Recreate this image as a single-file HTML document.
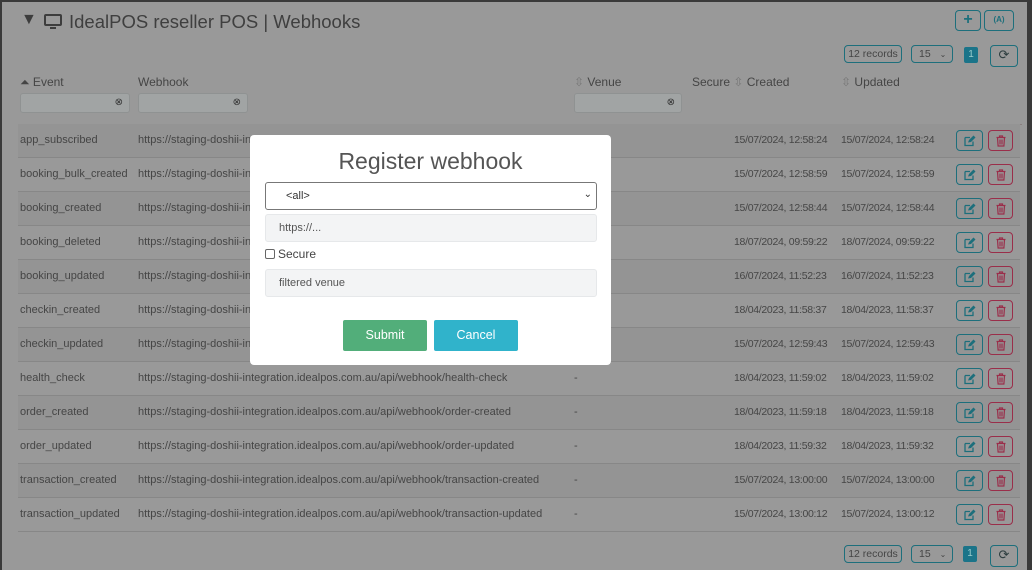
<!DOCTYPE html>
<html><head><meta charset="utf-8"><style>
*{box-sizing:border-box;margin:0;padding:0}
body{width:1032px;height:570px;overflow:hidden;background:#3a3a3a;font-family:"Liberation Sans",sans-serif;color:#454545;position:relative}
.page{position:absolute;left:2px;top:2px;width:1025px;height:568px;background:#999}
.abs{position:absolute;white-space:nowrap}
.t{font-size:11px}
.dt{font-size:10.5px;letter-spacing:-0.3px}
.btn{position:absolute;border:1.5px solid #1d6f7c;border-radius:4px}
.red{border-color:#9a2e4a}
.row{position:absolute;left:18px;width:1002px;height:34px;border-bottom:1px solid #878787}
.flt{position:absolute;height:20px;background:#a1a4a4;border:1px solid #8f9292;border-radius:3px}
.flt span{position:absolute;right:6px;top:3px;font-size:10px;color:#333}
.modal{position:absolute;left:250px;top:135px;width:361px;height:230px;background:#fff;border-radius:4px}
.inp{position:absolute;left:15px;width:332px;height:28px;background:#f3f4f5;border:1px solid #e6e8ea;border-radius:3px;font-size:11px;color:#555;padding:7px 13px}
.btn svg{position:absolute;left:50%;top:50%;transform:translate(-50%,-50%)}
</style></head><body>
<div class="page">
<div class="abs" style="left:19px;top:9px;font-size:16px;color:#3d3d3d">▼</div>
<svg class="abs" style="left:42px;top:12px" width="18" height="16" viewBox="0 0 18 16"><rect x="1" y="1" width="16" height="10" rx="1" fill="none" stroke="#3d3d3d" stroke-width="2"/><rect x="6" y="13" width="6" height="2" fill="#3d3d3d"/></svg>
<div class="abs" style="left:67px;top:9px;font-size:18.5px;color:#3f3f3f">IdealPOS reseller POS | Webhooks</div>
<div class="btn" style="left:953px;top:8px;width:26px;height:21px;color:#1d6f7c;font-size:16px;text-align:center;line-height:17px;font-weight:bold">+</div>
<div class="btn" style="left:982px;top:8px;width:30px;height:21px;color:#1d6f7c;font-size:8px;text-align:center;line-height:18px;font-weight:bold">(A)</div>
<div class="btn" style="left:842px;top:43px;width:58px;height:18px;border-width:1px;font-size:10.5px;text-align:center;line-height:16px">12 records</div>
<div class="btn" style="left:909px;top:43px;width:42px;height:18px;border-width:1px;font-size:10.5px;padding-left:7px;line-height:16px">15 <span style="margin-left:6px;font-size:8px">⌄</span></div>
<div class="abs" style="left:962px;top:45px;width:14px;height:16px;background:#1b7489;border-radius:2px;color:#9cc;font-size:10px;text-align:center;line-height:16px">1</div>
<div class="btn" style="left:988px;top:43px;width:28px;height:22px;text-align:center;line-height:18px;font-size:13px;color:#2d3d3f">⟳</div>
<div class="abs" style="left:18px;top:73px;font-size:12px">⏶ Event</div>
<div class="abs" style="left:136px;top:73px;font-size:12px">Webhook</div>
<div class="abs" style="left:572px;top:73px;font-size:12px"><span style="color:#777">⇳</span> Venue</div>
<div class="abs" style="left:690px;top:73px;font-size:12px">Secure <span style="color:#777">⇳</span> Created</div>
<div class="abs" style="left:839px;top:73px;font-size:12px"><span style="color:#777">⇳</span> Updated</div>
<div class="flt" style="left:18px;top:91px;width:110px"><span>⊗</span></div>
<div class="flt" style="left:136px;top:91px;width:110px"><span>⊗</span></div>
<div class="flt" style="left:572px;top:91px;width:108px"><span>⊗</span></div>
<div class="abs" style="left:18px;top:122px;width:1002px;border-top:1px solid #8a8080"></div>
</div>
<div style="position:absolute;left:0;top:0">
<script>
var d=[["app_subscribed","app-subscribed","15/07/2024, 12:58:24"],["booking_bulk_created","","15/07/2024, 12:58:59"],["booking_created","","15/07/2024, 12:58:44"],["booking_deleted","","18/07/2024, 09:59:22"],["booking_updated","","16/07/2024, 11:52:23"],["checkin_created","","18/04/2023, 11:58:37"],["checkin_updated","","15/07/2024, 12:59:43"],["health_check","health-check","18/04/2023, 11:59:02"],["order_created","order-created","18/04/2023, 11:59:18"],["order_updated","order-updated","18/04/2023, 11:59:32"],["transaction_created","transaction-created","15/07/2024, 13:00:00"],["transaction_updated","transaction-updated","15/07/2024, 13:00:12"]];
var ed='<svg width="12" height="11" viewBox="0 0 12 11"><path d="M1 2h5M1 2v8h8V6" fill="none" stroke="#1d6f7c" stroke-width="1.3"/><path d="M4 7l1-2.5L9.5 0 11.5 2 7 6.5z" fill="#1d6f7c"/></svg>';
var tr='<svg width="10" height="12" viewBox="0 0 10 12"><path d="M0.5 2.5h9M3.5 2.5V1h3v1.5M1.5 2.5l.6 8.5h5.8l.6-8.5M4 4.5v5M6 4.5v5" fill="none" stroke="#9a2e4a" stroke-width="1.2"/></svg>';
var h="";
d.forEach(function(r,i){var y=124+i*34;
h+='<div class="row" style="top:'+y+'px;background:'+(i%2==0?'#949494':'#999')+'"></div>';
h+='<div class="abs t" style="left:20px;top:'+(y+10)+'px">'+r[0]+'</div>';
h+='<div class="abs t" style="left:138px;top:'+(y+10)+'px">https://staging-doshii-integration.idealpos.com.au/api/webhook/'+(r[1]||r[0].replace(/_/g,'-'))+'</div>';
h+='<div class="abs t" style="left:574px;top:'+(y+10)+'px">-</div>';
h+='<div class="abs dt" style="left:734px;top:'+(y+10)+'px">'+r[2]+'</div>';
h+='<div class="abs dt" style="left:841px;top:'+(y+10)+'px">'+r[2]+'</div>';
h+='<div class="btn" style="left:956px;top:'+(y+6)+'px;width:27px;height:21px">'+ed+'</div>';
h+='<div class="btn red" style="left:988px;top:'+(y+6)+'px;width:25px;height:21px">'+tr+'</div>';
});
h+='<div class="btn" style="left:844px;top:545px;width:58px;height:18px;border-width:1px;font-size:10.5px;text-align:center;line-height:16px">12 records</div>';
h+='<div class="btn" style="left:911px;top:545px;width:42px;height:18px;border-width:1px;font-size:10.5px;padding-left:7px;line-height:16px">15 <span style="margin-left:6px;font-size:8px">⌄</span></div>';
h+='<div class="abs" style="left:963px;top:546px;width:14px;height:16px;background:#1b7489;border-radius:2px;color:#9cc;font-size:10px;text-align:center;line-height:16px">1</div>';
h+='<div class="btn" style="left:990px;top:545px;width:28px;height:22px;text-align:center;line-height:18px;font-size:13px;color:#2d3d3f">⟳</div>';
document.write(h);
</script>
</div>
<div class="modal">
<div class="abs" style="left:0;width:361px;text-align:center;top:13px;font-size:23px;color:#555">Register webhook</div>
<div class="inp" style="top:47px;background:#fff;border:1px solid #777;border-radius:3px;padding:7px 20px;color:#333">&lt;all&gt;<span style="position:absolute;right:4px;top:6px;font-size:10px">⌄</span></div>
<div class="inp" style="top:79px">https://...</div>
<div class="abs" style="left:15px;top:114px;width:10px;height:10px;border:1px solid #666;border-radius:2px"></div>
<div class="abs" style="left:28px;top:112px;font-size:12px;color:#444">Secure</div>
<div class="inp" style="top:134px">filtered venue</div>
<div class="abs" style="left:93px;top:185px;width:84px;height:31px;background:#52ae7a;border-radius:2px;color:#fff;font-size:12.5px;text-align:center;line-height:31px">Submit</div>
<div class="abs" style="left:184px;top:185px;width:84px;height:31px;background:#30b3cb;border-radius:2px;color:#fff;font-size:12.5px;text-align:center;line-height:31px">Cancel</div>
</div>
</body></html>
